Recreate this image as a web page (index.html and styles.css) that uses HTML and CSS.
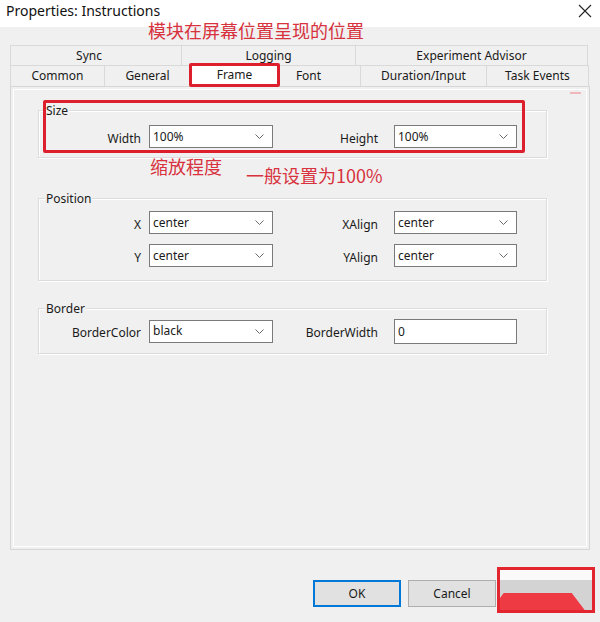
FILE: index.html
```html
<!DOCTYPE html>
<html lang="en">
<head>
    <meta charset="UTF-8">
    <meta name="viewport" content="width=device-width, initial-scale=1.0">
    <title>Properties: Instructions</title>
    <link rel="stylesheet" href="styles.css">
</head>
<body>
    <div class="window">
        <div class="titlebar">
            <span class="title">Properties: Instructions</span>
            <svg class="close" width="14" height="14" viewBox="0 0 14 14">
                <path d="M1 1 L13 13 M13 1 L1 13" stroke="#222" stroke-width="1.1" fill="none"/>
            </svg>
        </div>

        <div class="content">
            <div class="tabs">
                <div class="tab-row">
                    <div class="tab tab-sync">Sync</div>
                    <div class="tab tab-logging">Logging</div>
                    <div class="tab tab-advisor">Experiment Advisor</div>
                </div>
                <div class="tab-row">
                    <div class="tab tab-common">Common</div>
                    <div class="tab tab-general">General</div>
                    <div class="tab tab-frame active">Frame</div>
                    <div class="tab tab-font">Font</div>
                    <div class="tab tab-duration">Duration/Input</div>
                    <div class="tab tab-events">Task Events</div>
                </div>
            </div>

            <div class="page">
                <div class="group group-size">
                    <div class="group-title">Size</div>
                    <div class="fields">
                        <label class="field-label">Width</label>
                        <div class="select"><span>100%</span><svg width="9" height="5" viewBox="0 0 9 5"><path d="M0.5 0.5 L4.5 4.5 L8.5 0.5" stroke="#444" fill="none"/></svg></div>
                        <label class="field-label wide">Height</label>
                        <div class="select"><span>100%</span><svg width="9" height="5" viewBox="0 0 9 5"><path d="M0.5 0.5 L4.5 4.5 L8.5 0.5" stroke="#444" fill="none"/></svg></div>
                    </div>
                </div>

                <div class="group group-position">
                    <div class="group-title">Position</div>
                    <div class="fields">
                        <label class="field-label">X</label>
                        <div class="select"><span>center</span><svg width="9" height="5" viewBox="0 0 9 5"><path d="M0.5 0.5 L4.5 4.5 L8.5 0.5" stroke="#444" fill="none"/></svg></div>
                        <label class="field-label wide">XAlign</label>
                        <div class="select"><span>center</span><svg width="9" height="5" viewBox="0 0 9 5"><path d="M0.5 0.5 L4.5 4.5 L8.5 0.5" stroke="#444" fill="none"/></svg></div>

                        <label class="field-label">Y</label>
                        <div class="select"><span>center</span><svg width="9" height="5" viewBox="0 0 9 5"><path d="M0.5 0.5 L4.5 4.5 L8.5 0.5" stroke="#444" fill="none"/></svg></div>
                        <label class="field-label wide">YAlign</label>
                        <div class="select"><span>center</span><svg width="9" height="5" viewBox="0 0 9 5"><path d="M0.5 0.5 L4.5 4.5 L8.5 0.5" stroke="#444" fill="none"/></svg></div>
                    </div>
                </div>

                <div class="group group-border">
                    <div class="group-title">Border</div>
                    <div class="fields">
                        <label class="field-label">BorderColor</label>
                        <div class="select"><span>black</span><svg width="9" height="5" viewBox="0 0 9 5"><path d="M0.5 0.5 L4.5 4.5 L8.5 0.5" stroke="#444" fill="none"/></svg></div>
                        <label class="field-label wide">BorderWidth</label>
                        <div class="text-input">0</div>
                    </div>
                </div>
            </div>

            <div class="buttons">
                <button class="btn btn-default">OK</button>
                <button class="btn">Cancel</button>
                <button class="btn">Apply</button>
            </div>
        </div>

        <!-- red annotations drawn over the dialog -->
        <div class="note note-top">模块在屏幕位置呈现的位置</div>
        <div class="mark-box mark-frame"></div>
        <div class="mark-box mark-size"></div>
        <div class="mark-dash"></div>
        <div class="note note-scale">缩放程度</div>
        <div class="note note-hint">一般设置为100%</div>
        <div class="redact"><div class="redact-fill"></div></div>
    </div>
</body>
</html>
```

FILE: styles.css
```css
* {
    margin: 0;
    padding: 0;
    box-sizing: border-box;
}

body {
    font-family: "Noto Sans", "Noto Sans CJK SC", sans-serif;
    font-size: 12px;
    color: #1a1a1a;
    background: #f0f0f0;
}

.window {
    position: relative;
    width: 600px;
    height: 622px;
    overflow: hidden;
    background: #f0f0f0;
}

.titlebar {
    height: 27px;
    background: #fff;
    display: flex;
    justify-content: space-between;
    align-items: flex-start;
    padding: 1px 8px 0 6px;
}

.title {
    font-size: 14px;
    line-height: 20px;
    color: #111;
}

.close {
    margin-top: 3px;
}

.content {
    padding: 18px 7px 0 10px;
}

/* tabs */
.tabs {
    width: 580px;
}

.tab-row {
    display: flex;
}

.tab-row:first-child {
    height: 20px;
    width: 578px;
}

.tab-row:last-child {
    height: 21px;
}

.tab {
    border: 1px solid #d9d9d9;
    border-bottom: none;
    margin-right: -1px;
    text-align: center;
    line-height: 19px;
    color: #1a1a1a;
    background: #f0f0f0;
}

.tab-sync { width: 172px; padding-right: 14px; }
.tab-logging { width: 175px; }
.tab-advisor { width: 233px; }

.tab-common { width: 95px; }
.tab-general { width: 87px; }
.tab-frame { width: 89px; }
.tab-font { width: 83px; padding-right: 22px; }
.tab-duration { width: 127px; }
.tab-events { width: 103px; }

.tab.active {
    background: #fff;
    line-height: 18px;
}

/* page */
.page {
    width: 580px;
    height: 464px;
    border: 1px solid #d6d6d6;
    box-shadow: inset 0 0 0 2px #f0f0f0, inset 0 0 0 3px #fff;
    padding: 23px 0 0 27px;
}

.group {
    width: 509px;
    border: 1px solid #dcdcdc;
    box-shadow: 1px 1px 0 #fff, inset 1px 1px 0 #fff;
}

.group-title {
    display: block;
    width: fit-content;
    margin: -8px 0 0 6px;
    padding: 0 1px;
    height: 15px;
    line-height: 15px;
    background: #f0f0f0;
}

.group-size {
    padding-bottom: 9px;
}

.group-size .fields {
    padding-top: 7px;
}

.group-position {
    margin-top: 40px;
    padding-bottom: 13px;
}

.group-position .fields {
    padding-top: 5px;
    row-gap: 10px;
}

.group-border {
    margin-top: 27px;
    padding-bottom: 9px;
}

.group-border .fields {
    padding-top: 2px;
}

.fields {
    display: grid;
    grid-template-columns: 110px 124px 121px 123px;
    align-items: center;
}

.field-label {
    text-align: right;
    padding-right: 8px;
    padding-top: 3px;
}

.field-label.wide {
    padding-right: 16px;
}

.select,
.text-input {
    height: 23px;
    background: #fff;
    border: 1px solid #7a7a7a;
    display: flex;
    align-items: center;
    justify-content: space-between;
    padding: 0 8px 0 3px;
}

.select span {
    line-height: 18px;
}

.select svg {
    opacity: 0.8;
}

.text-input {
    height: 25px;
    margin-top: 1px;
}

/* buttons */
.buttons {
    display: flex;
    justify-content: flex-end;
    gap: 7px;
    margin: 30px 2px 0 0;
}

.btn {
    width: 88px;
    height: 27px;
    font-family: inherit;
    font-size: 12px;
    color: #1a1a1a;
    background: #e1e1e1;
    border: 1px solid #adadad;
}

.btn-default {
    border: 2px solid #0078d7;
}

/* annotations */
.note {
    position: absolute;
    font-family: "Noto Sans CJK SC", sans-serif;
    font-size: 18px;
    line-height: 20px;
    color: #d7323d;
}

.note-top {
    left: 148px;
    top: 20px;
}

.note-scale {
    left: 150px;
    top: 156px;
}

.note-hint {
    left: 246px;
    top: 165px;
}

.mark-box {
    position: absolute;
    border: 3px solid #dd1f2d;
    border-radius: 2px;
}

.mark-frame {
    left: 189px;
    top: 63px;
    width: 91px;
    height: 24px;
}

.mark-size {
    left: 43px;
    top: 100px;
    width: 482px;
    height: 53px;
}

.mark-dash {
    position: absolute;
    left: 570px;
    top: 92px;
    width: 11px;
    height: 2px;
    background: #f0b8bb;
}

.redact {
    position: absolute;
    left: 497px;
    top: 567px;
    width: 98px;
    height: 46px;
    border: 3px solid #e2252f;
    background: linear-gradient(to bottom, #fafafa 0 10px, #d3d3d3 10px 100%);
}

.redact-fill {
    position: absolute;
    left: 0;
    right: 0;
    bottom: 0;
    height: 17px;
    background: #ee3a43;
    clip-path: polygon(4% 0, 78% 0, 92% 100%, 0 100%, 0 30%);
}
```
